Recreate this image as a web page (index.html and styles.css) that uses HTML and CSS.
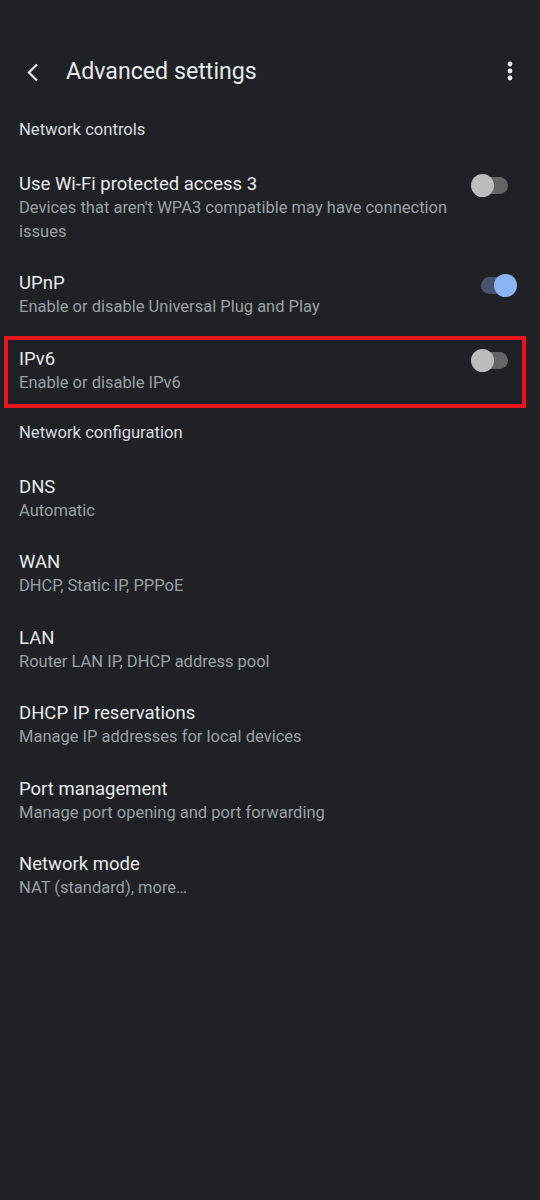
FILE: index.html
```html
<!DOCTYPE html>
<html lang="en">
<head>
<meta charset="utf-8">
<title>Advanced settings</title>
<link rel="stylesheet" href="styles.css">
</head>
<body>
<div class="screen">
  <header class="appbar">
    <span class="back">
      <svg width="24" height="24" viewBox="0 0 24 24"><polyline points="16.2,6.3 8.9,13.5 16.2,20.7" fill="none" stroke="#e8eaed" stroke-width="2.2" stroke-linecap="square" stroke-linejoin="miter"/></svg>
    </span>
    <h1 class="title">Advanced settings</h1>
    <span class="more">
      <svg width="24" height="24" viewBox="0 0 24 24"><circle cx="12" cy="5" r="2.4" fill="#e8eaed"/><circle cx="12" cy="12" r="2.4" fill="#e8eaed"/><circle cx="12" cy="19" r="2.4" fill="#e8eaed"/></svg>
    </span>
  </header>

  <div class="section-head first">Network controls</div>

  <div class="item">
    <div class="text">
      <div class="item-title">Use Wi-Fi protected access 3</div>
      <div class="item-sub">Devices that aren't WPA3 compatible may have connection issues</div>
    </div>
    <span class="switch"><span class="track"></span><span class="thumb"></span></span>
  </div>

  <div class="item">
    <div class="text">
      <div class="item-title">UPnP</div>
      <div class="item-sub">Enable or disable Universal Plug and Play</div>
    </div>
    <span class="switch on"><span class="track"></span><span class="thumb"></span></span>
  </div>

  <div class="item highlighted">
    <div class="text">
      <div class="item-title">IPv6</div>
      <div class="item-sub">Enable or disable IPv6</div>
    </div>
    <span class="switch"><span class="track"></span><span class="thumb"></span></span>
    <span class="mark"></span>
  </div>

  <div class="section-head">Network configuration</div>

  <div class="item">
    <div class="text">
      <div class="item-title">DNS</div>
      <div class="item-sub">Automatic</div>
    </div>
  </div>
  <div class="item">
    <div class="text">
      <div class="item-title">WAN</div>
      <div class="item-sub">DHCP, Static IP, PPPoE</div>
    </div>
  </div>
  <div class="item">
    <div class="text">
      <div class="item-title">LAN</div>
      <div class="item-sub">Router LAN IP, DHCP address pool</div>
    </div>
  </div>
  <div class="item">
    <div class="text">
      <div class="item-title">DHCP IP reservations</div>
      <div class="item-sub">Manage IP addresses for local devices</div>
    </div>
  </div>
  <div class="item">
    <div class="text">
      <div class="item-title">Port management</div>
      <div class="item-sub">Manage port opening and port forwarding</div>
    </div>
  </div>
  <div class="item">
    <div class="text">
      <div class="item-title">Network mode</div>
      <div class="item-sub">NAT (standard), more…</div>
    </div>
  </div>
</div>
</body>
</html>
```

FILE: styles.css
```css
* { box-sizing: border-box; }

html, body {
  margin: 0;
  padding: 0;
  background: #202124;
}

body {
  font-family: Roboto, "Noto Sans", "Liberation Sans", sans-serif;
  color: #e8eaed;
  width: 540px;
  min-height: 1200px;
}

.screen {
  display: flex;
  flex-direction: column;
}

.appbar {
  display: flex;
  align-items: center;
  height: 48px;
  margin-top: 47px;
  padding: 0 18px 0 20px;
}

.back, .more {
  display: flex;
  width: 24px;
  height: 24px;
}

.title {
  flex: 1;
  margin: 0 0 0 22px;
  font-size: 23.2px;
  font-weight: 400;
  line-height: 28px;
  color: #e8eaed;
}

.section-head {
  padding: 12.5px 19px 16px;
  font-size: 16.6px;
  line-height: 24px;
  color: #dadce0;
}

.section-head.first {
  padding-top: 23px;
}

.item {
  position: relative;
  display: flex;
  align-items: flex-start;
  padding: 13.75px 23px 13.75px 19px;
}

.text {
  flex: 1;
  min-width: 0;
  padding-right: 4px;
}

.item-title {
  font-size: 18.5px;
  line-height: 24px;
  color: #e8eaed;
}

.item-sub {
  font-size: 16.5px;
  line-height: 24px;
  color: #9aa0a6;
}

.switch {
  position: relative;
  flex: none;
  width: 46px;
  height: 23px;
  margin-top: 2.5px;
}

.track {
  position: absolute;
  left: 10px;
  top: 3px;
  width: 27px;
  height: 17px;
  border-radius: 8.5px;
  background: #656565;
}

.thumb {
  position: absolute;
  left: 0;
  top: 0;
  width: 23px;
  height: 23px;
  border-radius: 50%;
  background: #bdbdbd;
}

.switch.on .track {
  background: #475470;
}

.switch.on .thumb {
  left: 23px;
  background: #8ab4f8;
}

.mark {
  position: absolute;
  left: 4px;
  right: 14px;
  top: 3px;
  bottom: 0.5px;
  border: 4px solid #e8151d;
  pointer-events: none;
}
```
